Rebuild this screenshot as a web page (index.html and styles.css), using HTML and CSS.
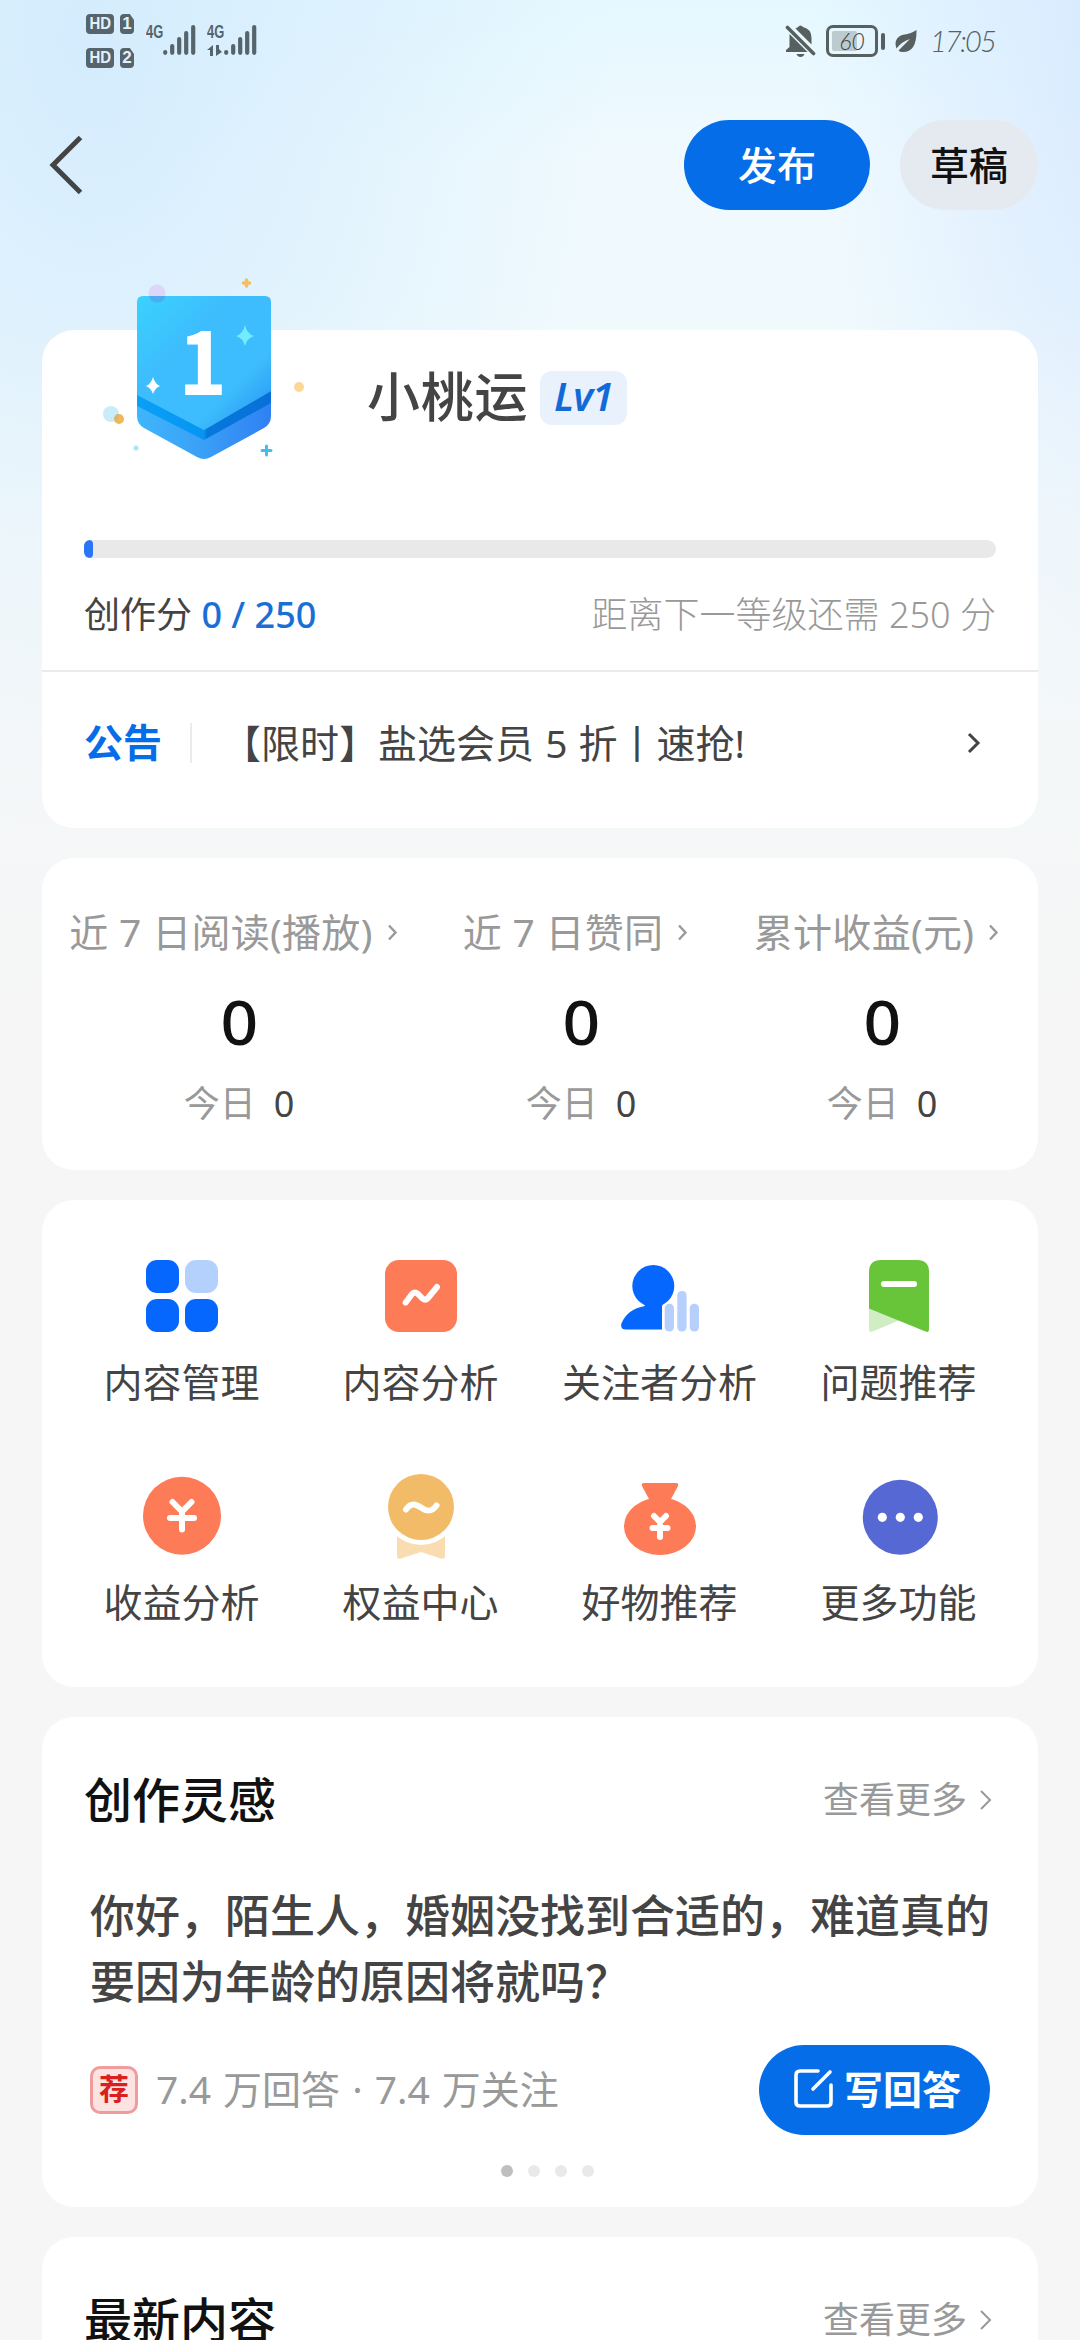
FILE: index.html
```html
<!DOCTYPE html>
<html lang="zh-CN">
<head>
<meta charset="utf-8">
<title>创作中心</title>
<link rel="stylesheet" href="styles.css">
</head>
<body>
<div class="page">
  <header class="status">
    <div class="hd-group">
      <div class="hd-row"><span class="hd"><em>HD</em></span><span class="sim">1</span></div>
      <div class="hd-row"><span class="hd"><em>HD</em></span><span class="sim">2</span></div>
    </div>
    <div class="signal">
      <span class="net">4G</span>
      <svg class="bars" width="34" height="32" viewBox="0 0 34 32"><g stroke="#56646c" stroke-width="4.2" stroke-linecap="round"><path d="M2.2 28v.8M9.2 22v6.8M16.2 15v13.8M23.2 9v19.8M30.2 3v25.8"/></g></svg>
    </div>
    <div class="signal second">
      <span class="net">4G</span>
      <svg class="updown" width="16" height="12" viewBox="0 0 16 12"><path d="M0 5L6 0V11H3V5ZM9 0h3v4l3 3-6 4Z" fill="#56646c"/></svg>
      <svg class="bars" width="34" height="32" viewBox="0 0 34 32"><g stroke="#56646c" stroke-width="4.2" stroke-linecap="round"><path d="M2.2 28v.8M9.2 22v6.8M16.2 15v13.8M23.2 9v19.8M30.2 3v25.8"/></g></svg>
    </div>
    <div class="status-right">
      <svg width="32" height="34" viewBox="0 0 32 34"><path d="M4.500 10L22.500 28H1V26l3.500-3ZM10.500 4.500Q12 3.500 13 3Q15.500 0 18 3Q26.500 5 26.500 14V20.500Z" fill="#55605f"/><path d="M2.500 3.500L28.500 29.500" stroke="#55605f" stroke-width="3.600" stroke-linecap="round"/><path d="M11.500 30h8q-1 3-4 3t-4-3Z" fill="#55605f"/></svg>
      <div class="battery"><div class="level"></div><span>60</span></div><i class="cap"></i>
      <svg class="leaf" width="22" height="22" viewBox="0 0 22 22"><path d="M21.500 0Q22 22 8 22Q5 22 3.500 20.500Q9 15 15 9Q6 12 1.500 18.500Q-2 9 7 5Q16 4 21.500 0Z" fill="#55605f"/></svg>
      <time>17:05</time>
    </div>
  </header>

  <nav class="topbar">
    <svg width="36" height="60" viewBox="0 0 36 60"><path d="M32.500 2.500L5 30L32.500 57.500" fill="none" stroke="#444" stroke-width="5"/></svg>
    <div class="actions"><button class="publish">发布</button><button class="draft">草稿</button></div>
  </nav>

  <main>
    <section class="card profile">
      <svg class="medal" width="240" height="210" viewBox="0 0 240 210">
        <defs>
          <linearGradient id="face" x1="0" y1="0" x2="1" y2="1"><stop offset="0" stop-color="#3bd2fc"/><stop offset=".35" stop-color="#3dbdfd"/><stop offset=".7" stop-color="#3dbdfd"/><stop offset="1" stop-color="#248df2"/></linearGradient>
          <linearGradient id="base" x1="0" y1="0" x2="1" y2="0"><stop offset="0" stop-color="#3fb6fc"/><stop offset=".5" stop-color="#3a9ff6"/><stop offset="1" stop-color="#2f80f4"/></linearGradient>
          <linearGradient id="fold" x1="0" y1="0" x2="1" y2="0"><stop offset="0" stop-color="#0aa0f5"/><stop offset=".5" stop-color="#0595f3"/><stop offset=".52" stop-color="#0678dc"/><stop offset="1" stop-color="#0870d8"/></linearGradient>
        </defs>
        <circle cx="67" cy="28" r="8.500" fill="#dcd6f8"/>
        <path d="M47 120V151Q47 159 54 163L107 192Q114 196 121 192L174 163Q181 159 181 151V120Z" fill="url(#base)"/>
        <path d="M47 128L114 165L181 126V138L114 175L47 141Z" fill="url(#fold)"/>
        <path d="M53 31H175Q181 31 181 37V126L114 165L47 130V37Q47 31 53 31Z" fill="url(#face)"/>
        <path d="M59 31h16.500a8.500 8.500 0 0 1-16.500 0Z" fill="#4bacef"/>
        <path d="M155 60Q157 69 164 71Q157 73 155 81Q153 73 146 71Q153 69 155 60Z" fill="#72edff"/>
        <path d="M63 112Q65 119 70 121Q65 123 63 129Q61 123 56 121Q61 119 63 112Z" fill="#fff"/>
        <path d="M156.500 15v6M153.500 18h6" stroke="#f6be63" stroke-width="3.600" stroke-linecap="round"/>
        <path d="M176.500 181v9M172 185.500h9" stroke="#45bfe8" stroke-width="3" stroke-linecap="round"/>
        <circle cx="21" cy="149" r="8" fill="#c8ecf8"/><circle cx="29" cy="154" r="5" fill="#efb85b"/><path d="M24.500 152q3-4 4-3q0 5-3 7q-2-2-1-4Z" fill="#ceb978"/>
        <circle cx="209" cy="122" r="5" fill="#fbd894"/><circle cx="46" cy="183" r="2.500" fill="#a4e6fa"/>
        <text class="rank" x="113" y="130">1</text>
      </svg>
      <div class="who"><h1>小桃运</h1><span class="level-tag">Lv1</span></div>
      <div class="progress"><i></i></div>
      <div class="score"><p>创作分 <b>0 / 250</b></p><span>距离下一等级还需 250 分</span></div>
      <div class="notice"><strong>公告</strong><p>【限时】盐选会员 5 折丨速抢!</p><svg width="14" height="22" viewBox="0 0 14 22"><path d="M2 2L11 11L2 20" fill="none" stroke="#444" stroke-width="3"/></svg></div>
    </section>

    <section class="card stats">
      <div class="stat s1"><h2>近 7 日阅读(播放)<svg width="11" height="17" viewBox="0 0 11 17"><path d="M2 1.500L8.500 8.500L2 15.500" fill="none" stroke="#999" stroke-width="2.400"/></svg></h2><b>0</b><p>今日<span>0</span></p></div>
      <div class="stat s2"><h2>近 7 日赞同<svg width="11" height="17" viewBox="0 0 11 17"><path d="M2 1.500L8.500 8.500L2 15.500" fill="none" stroke="#999" stroke-width="2.400"/></svg></h2><b>0</b><p>今日<span>0</span></p></div>
      <div class="stat s3"><h2>累计收益(元)<svg width="11" height="17" viewBox="0 0 11 17"><path d="M2 1.500L8.500 8.500L2 15.500" fill="none" stroke="#999" stroke-width="2.400"/></svg></h2><b>0</b><p>今日<span>0</span></p></div>
    </section>

    <section class="card tools">
      <div class="tool"><svg viewBox="0 0 90 90"><g fill="#0567fe"><rect x="9" y="9" width="33" height="33" rx="11"/><rect x="9" y="48" width="33" height="33" rx="11"/><rect x="48" y="48" width="33" height="33" rx="11"/></g><rect x="48" y="9" width="33" height="33" rx="11" fill="#b4d1fe"/></svg><span>内容管理</span></div>
      <div class="tool"><svg viewBox="0 0 90 90"><rect x="9" y="9" width="72" height="72" rx="14" fill="#fe7b57"/><path d="M29.700 51.500L36 43Q38.500 40 42 43L46.500 47.500Q49.500 50 52 47L61 36" fill="none" stroke="#fff" stroke-width="6" stroke-linecap="round"/></svg><span>内容分析</span></div>
      <div class="tool"><svg viewBox="0 0 90 90"><circle cx="38.300" cy="35" r="21" fill="#0567fe"/><path d="M30 55Q12 58 6.200 73Q5.200 78.500 11 78.500H47V56Q47 51.500 54 48L40 40L28 50Z" fill="#0567fe"/><g fill="#b6cffb"><rect x="49.700" y="52.700" width="9.300" height="27.800" rx="4.600"/><rect x="62.300" y="40" width="9.300" height="40.500" rx="4.600"/><rect x="74.700" y="52.700" width="9.300" height="27.800" rx="4.600"/></g></svg><span>关注者分析</span></div>
      <div class="tool"><svg viewBox="0 0 90 90"><path d="M15 54V78.500Q15 82 18.500 80.500L45 69.500Z" fill="#d1edc4"/><path d="M27 9H63Q75 9 75 21V78Q75 82 71.500 80.500L15 57.500V21Q15 9 27 9Z" fill="#68c439"/><path d="M30 33H60" stroke="#fff" stroke-width="6" stroke-linecap="round"/></svg><span>问题推荐</span></div>
      <div class="tool"><svg viewBox="0 0 90 90"><circle cx="45" cy="44.700" r="39" fill="#fe7b57"/><path d="M35.500 31L45 40.500L54.500 31M33 47H57M45 41V58.500" fill="none" stroke="#fff" stroke-width="6" stroke-linecap="round"/></svg><span>收益分析</span></div>
      <div class="tool"><svg viewBox="0 0 90 90"><path d="M21 62H69V85Q69 88.500 65 87.500L45 81L25 87.500Q21 88.500 21 85Z" fill="#f9dcb0"/><circle cx="45" cy="36" r="38" fill="#fff"/><circle cx="45" cy="36" r="33" fill="#f2bb67"/><path d="M30 38.500C35 31 40 33 45 36.500S55 42 60.500 34.500" fill="none" stroke="#fff" stroke-width="6" stroke-linecap="round"/></svg><span>权益中心</span></div>
      <div class="tool"><svg viewBox="0 0 90 90"><ellipse cx="45" cy="55.300" rx="36" ry="28.700" fill="#fe7b57"/><path d="M29 12H61Q64.500 12 62.500 16L56 28H34L27.500 16Q25.500 12 29 12Z" fill="#fe7b57"/><path d="M39 45L45 51L51 45M37.500 57H52.500M45 51V66" fill="none" stroke="#fff" stroke-width="6" stroke-linecap="round"/></svg><span>好物推荐</span></div>
      <div class="tool"><svg viewBox="0 0 90 90"><circle cx="46.300" cy="46.300" r="37.500" fill="#5668d3"/><g fill="#fff"><circle cx="28.300" cy="46.300" r="4.600"/><circle cx="46.300" cy="46.300" r="4.600"/><circle cx="64.300" cy="46.300" r="4.600"/></g></svg><span>更多功能</span></div>
    </section>

    <section class="card ideas">
      <div class="head"><h2>创作灵感</h2><a>查看更多<svg width="14" height="22" viewBox="0 0 14 22"><path d="M2 2L11 11L2 20" fill="none" stroke="#999" stroke-width="2"/></svg></a></div>
      <p class="question">你好，陌生人，婚姻没找到合适的，难道真的要因为年龄的原因将就吗？</p>
      <div class="meta"><span class="rec">荐</span><span class="counts">7.4 万回答 · 7.4 万关注</span>
        <button class="answer"><svg width="42" height="42" viewBox="0 0 42 42"><path d="M25 3H7Q3 3 3 7V34Q3 38 7 38H34Q38 38 38 34V17M20 21L37 4" fill="none" stroke="#fff" stroke-width="3.600" stroke-linecap="round"/></svg>写回答</button></div>
      <div class="dots"><i class="on"></i><i></i><i></i><i></i></div>
    </section>

    <section class="card latest">
      <div class="head"><h2>最新内容</h2><a>查看更多<svg width="14" height="22" viewBox="0 0 14 22"><path d="M2 2L11 11L2 20" fill="none" stroke="#999" stroke-width="2"/></svg></a></div>
    </section>
  </main>
</div>
</body>
</html>
```
FILE: styles.css
```css
* { box-sizing: border-box; margin: 0; padding: 0; }
html, body { width: 1080px; height: 2340px; overflow: hidden; }
body { font-family: "Noto Sans", "Noto Sans CJK SC", sans-serif; color: #444; background: #f6f6f6; }
svg { display: block; flex: none; }
i, em { font-style: normal; }
button { border: 0; font: inherit; white-space: nowrap; }
.page {
  height: 2340px; overflow: hidden;
  background:
    linear-gradient(180deg, rgba(246,246,246,0) 0, rgba(246,246,246,0) 300px, #f6f6f6 1000px),
    radial-gradient(ellipse 340px 700px at 1150px 40px, #d6e8fe 0, rgba(214,232,254,0) 100%),
    radial-gradient(ellipse 520px 800px at 90px 40px, #d4ecfd 0, rgba(212,236,253,0) 100%),
    linear-gradient(180deg, #e5f8ff 0, #f0fafe 160px, #f3fafd 100%);
}

/* status bar */
.status { height: 82px; padding: 14px 88px 0 86px; display: flex; align-items: flex-start; }
.hd-group { display: flex; flex-direction: column; gap: 14px; width: 60px; }
.hd-row { display: flex; gap: 6px; height: 20px; }
.hd, .sim { background: #56646c; color: #e2f2fc; font: 700 17px/20px "Liberation Sans", sans-serif; text-align: center; border-radius: 4px; }
.hd { width: 28px; display: flex; justify-content: center; }
.hd em { transform: scaleX(.88); }
.sim { width: 14px; clip-path: polygon(0 0, 70% 0, 100% 30%, 100% 100%, 0 100%); }
.signal { display: flex; width: 51px; height: 42px; padding-top: 10px; position: relative; }
.signal.second { margin-left: 10px; }
.net { width: 17px; font: 700 19px/15px "Liberation Sans", sans-serif; color: #56646c; transform: scaleX(.68); transform-origin: 0 0; }
.updown { position: absolute; left: 0; top: 31px; }
.status-right { margin-left: auto; display: flex; align-items: center; height: 34px; margin-top: 10px; }
.battery { position: relative; width: 52px; height: 32px; margin-left: 9px; border: 3px solid #55605f; border-radius: 7px; padding: 3px; font: italic 300 23px/20px Lato, sans-serif; text-align: center; }
.battery .level { width: 25px; height: 20px; background: #bccbcf; border-radius: 2px; }
.battery span { position: absolute; left: 0; right: 0; top: 3px; }
.cap { width: 4px; height: 17px; margin-left: 3px; border-radius: 2px; background: #55605f; }
.leaf { margin-left: 10px; }
.status time { width: 62px; margin-left: 13px; font: italic 300 29px/34px Lato, sans-serif; color: #55605f; white-space: nowrap; letter-spacing: -1.8px; }

/* top bar */
.topbar { height: 248px; padding: 38px 42px 0 48px; display: flex; justify-content: space-between; align-items: flex-start; }
.topbar > svg { margin-top: 15px; }
.actions { display: flex; gap: 30px; }
.actions button { height: 90px; border-radius: 45px; font-size: 39px; line-height: 86px; padding-bottom: 4px; font-weight: 500; font-family: "Noto Sans CJK SC", sans-serif; }
.publish { width: 186px; background: #056de8; color: #fff; }
.draft { width: 138px; background: #e4eaef; color: #111; }

main { padding: 0 42px; display: flex; flex-direction: column; gap: 30px; }
.card { background: #fff; border-radius: 32px; }

/* profile */
.profile { height: 498px; position: relative; }
.medal { position: absolute; left: 48px; top: -65px; }
.rank { font: 700 88px "Noto Sans Mono CJK SC", "DejaVu Sans", sans-serif; fill: #fff; text-anchor: middle; }
.who { height: 210px; padding: 24px 0 0 325px; display: flex; align-items: flex-start; }
.who h1 { width: 159px; font: 500 53px/80px "Noto Sans CJK SC", sans-serif; letter-spacing: .7px; white-space: nowrap; color: #444; }
.level-tag { width: 87px; height: 54px; margin: 17px 0 0 14px; border-radius: 12px; background: #e9f2fc; color: #1269d8; font-size: 40px; line-height: 50px; font-weight: 600; font-style: italic; text-align: center; letter-spacing: -1px; }
.progress { height: 18px; margin: 0 42px; border-radius: 6px 9px 9px 6px; background: #e9e9e9; overflow: hidden; }
.progress i { display: block; width: 9px; height: 18px; border-radius: 4px; background: #2b76f6; }
.score { height: 114px; padding: 31px 42px 0; border-bottom: 2px solid #ebebeb; display: flex; justify-content: space-between; font-size: 36px; line-height: 52px; }
.score b { color: #1a6fd6; font-weight: 500; }
.score span { color: #999; font-weight: 300; }
.notice { height: 144px; padding: 0 57px 2px 42px; display: flex; align-items: center; font-size: 39px; line-height: 56px; }
.notice strong { width: 108px; height: 40px; line-height: 38px; border-right: 2px solid #ebebeb; color: #056de8; }
.notice p { flex: 1; padding-left: 30px; white-space: nowrap; word-spacing: 1px; }

/* stats */
.stats { height: 312px; display: flex; }
.stat { display: flex; flex-direction: column; align-items: center; padding-top: 46px; }
.s1 { width: 394px; } .s2 { width: 290px; } .s3 { width: 312px; }
.stat h2 { display: flex; align-items: center; gap: 14px; margin-left: -11px; letter-spacing: .3px; font-size: 39px; line-height: 56px; font-weight: 400; color: #999; white-space: nowrap; }
.stat > b { font-size: 61px; line-height: 80px; margin-top: 22px; font-weight: 500; color: #111; transform: scaleX(1.08); }
.stat p { font-size: 36px; line-height: 52px; margin-top: 16px; color: #999; }
.stat p span { color: #444; margin-left: 18px; }

/* tools */
.tools { height: 487px; padding: 51px 20px 0; display: grid; grid-template-columns: repeat(4, 239px); grid-auto-rows: 220px; }
.tool { display: flex; flex-direction: column; align-items: center; font-size: 39px; line-height: 56px; }
.tool svg { width: 90px; height: 90px; }
.tool span { margin-top: 13px; white-space: nowrap; }

/* ideas */
.head { display: flex; justify-content: space-between; align-items: center; height: 72px; padding: 0 45px 0 42px; }
.head h2 { font-size: 48px; line-height: 72px; font-weight: 500; color: #111; }
.head a { display: flex; align-items: center; gap: 12px; font-size: 36px; line-height: 52px; color: #999; }
.ideas { height: 490px; padding-top: 47px; }
.question { width: 900px; margin: 45px 0 0 48px; font: 500 45px/66px "Noto Sans CJK SC", sans-serif; color: #444; }
.meta { height: 90px; margin: 32px 48px 0; display: flex; align-items: center; font-size: 39px; line-height: 56px; color: #999; }
.rec { width: 48px; height: 48px; border: 3px solid #ef9c9c; border-radius: 10px; background: #fce3e1; color: #d9201f; font-size: 30px; line-height: 40px; font-weight: 700; text-align: center; }
.counts { margin-left: 18px; padding-bottom: 2px; word-spacing: 1.9px; }
.answer { margin-left: auto; width: 231px; height: 90px; padding: 0 0 2px 5px; border-radius: 45px; background: #056de8; color: #fff; display: flex; align-items: center; justify-content: center; gap: 9px; font-size: 39px; line-height: 88px; font-weight: 700; }
.dots { display: flex; justify-content: center; gap: 15px; margin: 30px 0 0 15px; }
.dots i { width: 12px; height: 12px; border-radius: 50%; background: #e9e9e9; }
.dots .on { background: #bfbfbf; }
.latest { height: 300px; padding-top: 47px; }
```
